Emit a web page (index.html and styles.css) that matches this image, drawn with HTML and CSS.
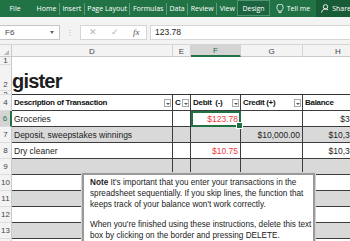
FILE: index.html
```html
<!DOCTYPE html>
<html lang="en">
<head>
    <meta charset="UTF-8">
    <title>Checkbook Register</title>
    <link rel="stylesheet" href="styles.css">
</head>
<body>
    <div class="ribbon">
        <span class="tab file">File</span>
        <span class="tab first">Home</span>
        <span class="tab">Insert</span>
        <span class="tab">Page Layout</span>
        <span class="tab">Formulas</span>
        <span class="tab">Data</span>
        <span class="tab">Review</span>
        <span class="tab">View</span>
        <span class="tab active">Design</span>
        <span class="tell">
            <svg width="8" height="10" viewBox="0 0 8 10"><path d="M2.3 7.2 C2.3 5.8 0.8 5 0.8 3.3 A3.2 3.2 0 0 1 7.2 3.3 C7.2 5 5.7 5.8 5.7 7.2 Z M2.6 8.5 H5.4" fill="none" stroke="#fff" stroke-width="0.8"/></svg>
            Tell me
        </span>
        <span class="share">
            <svg width="8" height="9" viewBox="0 0 8 9"><circle cx="4.5" cy="2.8" r="2.2" fill="none" stroke="#fff" stroke-width="0.9"/><path d="M0.6 8.6 C1 5.8 2.6 5 4.5 5 C5.6 5 6.4 5.3 7 5.9" fill="none" stroke="#fff" stroke-width="0.9"/></svg>
            Share
        </span>
    </div>

    <div class="formula-bar">
        <div class="name-box">
            <span>F6</span>
            <span class="caret"></span>
        </div>
        <span class="dots">⋮</span>
        <div class="fx-box">
            <span class="fx-btn">✕</span>
            <span class="fx-btn">✓</span>
            <span class="fx">fx</span>
        </div>
        <div class="value-box">123.78</div>
    </div>

    <div class="sheet">
        <div class="row head">
            <div class="corner"></div>
            <div class="ch">D</div>
            <div class="ch">E</div>
            <div class="ch on">F</div>
            <div class="ch">G</div>
            <div class="ch">H</div>
        </div>
        <div class="row r1"><div class="rh">1</div></div>
        <div class="row r2"><div class="rh">2</div><div class="title">gister</div></div>
        <div class="row r3">
            <div class="rh">3</div>
            <div class="edge"></div><div class="edge"></div><div class="edge"></div><div class="edge"></div><div class="edge"></div>
        </div>

        <div class="row">
            <div class="rh">4</div>
            <div class="c th">Description of Transaction<span class="filter"></span></div>
            <div class="c th">C<span class="filter"></span></div>
            <div class="c th">Debit&nbsp; (-)<span class="filter"></span></div>
            <div class="c th">Credit (+)<span class="filter"></span></div>
            <div class="c th">Balance</div>
        </div>
        <div class="row">
            <div class="rh on">6</div>
            <div class="c">Groceries</div>
            <div class="c"></div>
            <div class="c num red sel">$123.78</div>
            <div class="c num"></div>
            <div class="c num">$376.22</div>
        </div>
        <div class="row band">
            <div class="rh">7</div>
            <div class="c">Deposit, sweepstakes winnings</div>
            <div class="c"></div>
            <div class="c num"></div>
            <div class="c num">$10,000.00</div>
            <div class="c num">$10,376.22</div>
        </div>
        <div class="row">
            <div class="rh">8</div>
            <div class="c">Dry cleaner</div>
            <div class="c"></div>
            <div class="c num red">$10.75</div>
            <div class="c num"></div>
            <div class="c num">$10,365.47</div>
        </div>
        <div class="row band">
            <div class="rh">9</div>
            <div class="c"></div><div class="c"></div><div class="c"></div><div class="c"></div><div class="c"></div>
        </div>
        <div class="row">
            <div class="rh">10</div>
            <div class="c"></div><div class="c"></div><div class="c"></div><div class="c"></div><div class="c"></div>
        </div>
        <div class="row band">
            <div class="rh">11</div>
            <div class="c"></div><div class="c"></div><div class="c"></div><div class="c"></div><div class="c"></div>
        </div>
        <div class="row">
            <div class="rh">12</div>
            <div class="c"></div><div class="c"></div><div class="c"></div><div class="c"></div><div class="c"></div>
        </div>
        <div class="row band">
            <div class="rh">13</div>
            <div class="c"></div><div class="c"></div><div class="c"></div><div class="c"></div><div class="c"></div>
        </div>
        <div class="row">
            <div class="rh">14</div>
            <div class="c"></div><div class="c"></div><div class="c"></div><div class="c"></div><div class="c"></div>
        </div>

        <div class="note">
            <p><b>Note</b> It's important that you enter your transactions in the<br>spreadsheet sequentially. If you skip lines, the function that<br>keeps track of your balance won't work correctly.</p>
            <p>When you're finished using these instructions, delete this text<br>box by clicking on the border and pressing DELETE.</p>
        </div>
    </div>
</body>
</html>
```

FILE: styles.css
```css
* {
    margin: 0;
    padding: 0;
    box-sizing: border-box;
}

body {
    width: 350px;
    height: 241px;
    overflow: hidden;
    background: #ffffff;
    font-family: 'Liberation Sans', Arial, sans-serif;
    color: #222;
}

/* Ribbon */
.ribbon {
    height: 17px;
    background: #217346;
    display: flex;
    align-items: center;
    color: #ffffff;
    font-family: 'Open Sans', sans-serif;
    font-size: 7px;
    white-space: nowrap;
}

.tab {
    height: 12px;
    display: flex;
    align-items: center;
    padding: 0 2.5px;
    border-left: 1px solid #5c9c77;
}

.tab.file {
    border-left: none;
    margin-left: 7px;
    margin-right: 11px;
}

.tab.first {
    border-left: none;
}

.tab.active {
    height: 16px;
    margin-top: -1px;
    padding: 0 4px;
    background: #1c6340;
    border: 1px solid #4f9470;
}

.tell {
    display: flex;
    align-items: center;
    gap: 3px;
    margin-left: 6px;
}

.share {
    height: 17px;
    display: flex;
    align-items: center;
    gap: 3px;
    margin-left: 6px;
    padding-left: 5px;
    flex: 1;
    background: #185c37;
}

/* Formula bar */
.formula-bar {
    height: 28px;
    display: flex;
    align-items: center;
    padding-top: 3px;
    background: #f3f3f3;
    border-bottom: 1px solid #d6d6d6;
    font-size: 8px;
}

.name-box {
    width: 61px;
    height: 15px;
    margin-left: -1px;
    display: flex;
    align-items: center;
    justify-content: space-between;
    padding: 0 5px 0 5px;
    background: #ffffff;
    border: 1px solid #c6c6c6;
    color: #444;
}

.caret {
    width: 0;
    height: 0;
    border-left: 2.5px solid transparent;
    border-right: 2.5px solid transparent;
    border-top: 3px solid #666;
}

.dots {
    margin-left: 6px;
    color: #b5b5b5;
    font-size: 8px;
}

.fx-box {
    width: 67px;
    height: 15px;
    margin-left: 6px;
    display: flex;
    align-items: center;
    padding-left: 8px;
    gap: 14px;
    background: #ffffff;
    border: 1px solid #d6d6d6;
}

.fx-btn {
    color: #b4b4b4;
    font-size: 9px;
}

.fx {
    font-family: 'Liberation Serif', serif;
    font-style: italic;
    font-size: 9px;
    color: #555;
}

.value-box {
    flex: 1;
    height: 15px;
    margin-left: 3px;
    display: flex;
    align-items: center;
    padding-left: 4px;
    background: #ffffff;
    border: 1px solid #d6d6d6;
    border-right: none;
    font-size: 8.5px;
    color: #222;
}

/* Sheet */
.sheet {
    position: relative;
    height: 196px;
    overflow: hidden;
}

.row {
    display: grid;
    grid-template-columns: 12px 161px 18px 50px 62px 71px;
    height: 16px;
}

.row.head {
    height: 12px;
    background: #f3f3f3;
    border-bottom: 1px solid #c9c9c9;
}

.row.r1 { height: 8px; }
.row.r2 { height: 26px; }
.row.r3 { height: 4px; }

.corner {
    position: relative;
    border-right: 1px solid #c9c9c9;
}

.corner:after {
    content: "";
    position: absolute;
    right: 2px;
    bottom: 2px;
    border-left: 5px solid transparent;
    border-bottom: 5px solid #b8b8b8;
}

.ch {
    display: flex;
    align-items: center;
    justify-content: center;
    border-right: 1px solid #d4d4d4;
    font-size: 8px;
    color: #444;
}

.ch.on {
    background: #d4d4d4;
    color: #217346;
    border-bottom: 2px solid #217346;
    padding-top: 1px;
}

.rh {
    display: flex;
    align-items: center;
    justify-content: center;
    background: #f3f3f3;
    border-right: 1px solid #c9c9c9;
    border-bottom: 1px solid #dcdcdc;
    font-size: 8px;
    color: #444;
    overflow: hidden;
}

.r2 .rh {
    align-items: flex-end;
    padding-bottom: 1px;
}

.r3 .rh {
    align-items: flex-start;
    line-height: 8px;
}

.rh.on {
    background: #d4d4d4;
    color: #217346;
    border-right: 2px solid #217346;
}

.title {
    display: flex;
    align-items: flex-end;
    font-size: 20px;
    line-height: 20px;
    font-weight: bold;
    letter-spacing: -0.8px;
    color: #1e1e1e;
    white-space: nowrap;
}

.edge {
    border-bottom: 1px solid #333;
}

.c {
    display: flex;
    align-items: center;
    padding: 0 2px;
    border-right: 1px solid #3d3d3d;
    border-bottom: 1px solid #3d3d3d;
    font-size: 8.5px;
    color: #222;
    white-space: nowrap;
    overflow: hidden;
}

.c.th {
    justify-content: space-between;
    padding-right: 1px;
    font-weight: bold;
    font-size: 8px;
    letter-spacing: -0.3px;
    color: #111;
}

.filter {
    width: 7px;
    height: 8px;
    position: relative;
    background: #ffffff;
    border: 1px solid #a8a8a8;
}

.filter:after {
    content: "";
    position: absolute;
    left: 1px;
    top: 3px;
    border-left: 2px solid transparent;
    border-right: 2px solid transparent;
    border-top: 2px solid #555;
}

.c.num {
    justify-content: flex-end;
}

.c.red {
    color: #f03c3c;
}

.c.sel {
    position: relative;
    overflow: visible;
    outline: 2px solid #217346;
    outline-offset: -2px;
}

.c.sel:after {
    content: "";
    position: absolute;
    right: -3px;
    bottom: -3px;
    width: 5px;
    height: 5px;
    background: #217346;
    border: 1px solid #ffffff;
}

.band .c {
    background: #d9d9d9;
}

/* Text box over the sheet */
.note {
    position: absolute;
    left: 82px;
    top: 128px;
    width: 233px;
    height: 90px;
    padding: 2px 6px;
    background: #ffffff;
    border: 2px solid #9a9a9a;
    outline: 1px solid #d2d2d2;
    font-size: 8.2px;
    line-height: 11px;
    color: #222;
    white-space: nowrap;
}

.note p {
    margin-bottom: 9px;
}
```
